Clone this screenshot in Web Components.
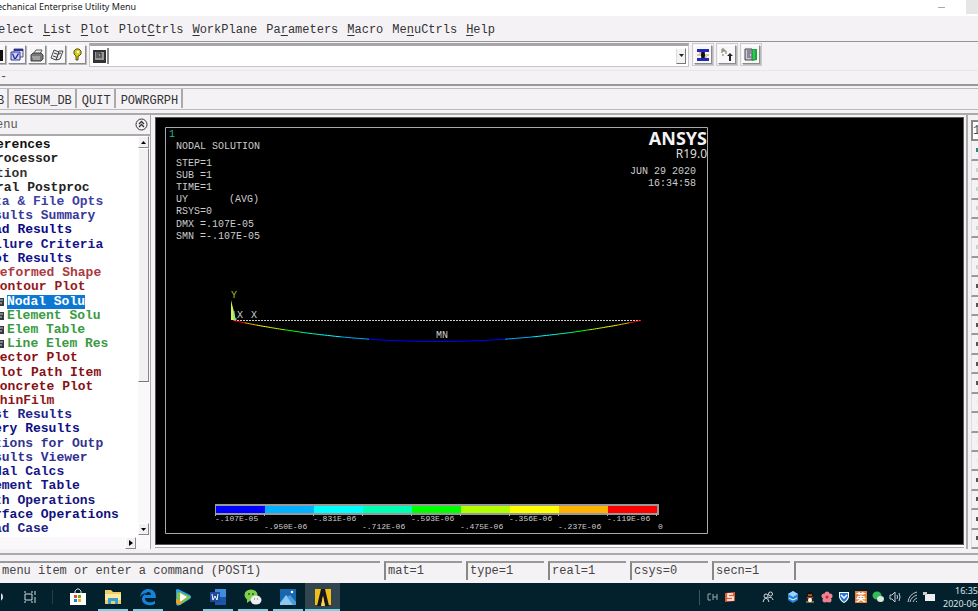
<!DOCTYPE html>
<html lang="en">
<head>
<meta charset="utf-8">
<title>Mechanical Enterprise Utility Menu</title>
<style>
html,body{margin:0;height:100%;overflow:hidden;background:#f5f2f6}
body{font-family:"Liberation Mono",monospace;font-size:12px;color:#333}
</style>
</head>
<body>
<ansys-app></ansys-app>
<script>
const base = `*{box-sizing:border-box}button,input{font:inherit;color:inherit;margin:0;padding:0;border:0;background:none;border-radius:0;outline:0}svg{display:block}`;
function define(name, css, html, after) {
  customElements.define(name, class extends HTMLElement {
    connectedCallback() {
      if (this.shadowRoot) return;
      const r = this.attachShadow({mode: 'open'});
      r.innerHTML = `<style>${base}${css}</style>${typeof html === 'function' ? html(this) : html}`;
      if (after) after(r, this);
    }
  });
}

define('title-bar', `
:host{display:flex;height:16px;background:#fff;color:#222;font:9px/14px "Noto Sans",sans-serif;justify-content:space-between}
span{white-space:nowrap;margin-left:-3px}
.w{display:flex;gap:18px}
button{width:12px;height:14px;line-height:12px;color:#888}
button:last-child{background:#e6e6e6}
`, `<span>echanical Enterprise Utility Menu</span><div class="w"><button aria-label="Minimize"><svg width="12" height="14"><path d="M2 7.5h7" stroke="#aaa"/></svg></button><button aria-label="Maximize"></button></div>`);

define('menu-bar', `
:host{display:flex;gap:9px;height:26px;padding-top:2px;margin-left:-2px;border-bottom:1px solid #949395;align-items:center;overflow:hidden}
button{white-space:nowrap;line-height:18px}
u{text-underline-offset:2px;text-decoration-thickness:1px}
`, ['elect','<u>L</u>ist','<u>P</u>lot','Plot<u>C</u>trls','<u>W</u>orkPlane','Pa<u>r</u>ameters','<u>M</u>acro','Me<u>n</u>uCtrls','<u>H</u>elp'].map(t => `<button>${t}</button>`).join(''));

define('tool-button', `
:host{display:block;flex:none}
button{display:grid;place-items:center;width:18px;height:19px;background:#f8f6f9;border:1px solid;border-color:#fff #8b8b8b #8b8b8b #fff;box-shadow:1px 1px #b9b9b9}
::slotted(svg){display:block}
`, h => `<button aria-label="${h.getAttribute('label')}"><slot></slot></button>`);

define('command-bar', `
:host{display:flex;box-sizing:border-box;height:29px;padding-bottom:3px;align-items:center;border-bottom:1px solid #e9e6ea}
.tools{display:flex;gap:2px;margin-left:-12px}
.combo{display:flex;flex:0 1 600px;height:24px;margin:0 1px 0 3px;border:1px solid #c8c6c9;padding:2px;background:#fff;border-top:3px solid #a5a4a6}
.combo>svg{margin:0 1px}
input{flex:1;min-width:0;border-left:2px solid #888;background:#fff}
.combo button{width:10px;border:1px solid;border-color:#fff #777 #777 #ddd;background:#f5f2f6;display:grid;place-items:center}
.g{border:1px solid #ccc;padding:1px;margin-left:2px}
`, `<div class="tools">
<tool-button label="Save"><svg width="14" height="14"><path d="M1 2h12v11H1z" fill="#111"/><path d="M4 2h6v4H4z" fill="#f4f1c0"/></svg></tool-button>
<tool-button label="Raise"><svg width="14" height="14"><path d="M4 1h9v8H4z" fill="#e6e6f5" stroke="#556"/><path d="M4 1h9v2H4z" fill="#2431a2"/><path d="M1 4h9v8H1z" fill="#ced3f1" stroke="#34389d"/><path d="M3 5l2 5 3-5 1 1-3 5H4L2 6z" fill="#2330a5"/></svg></tool-button>
<tool-button label="Print"><svg width="14" height="14"><path d="M4 5l2-3h6l-2 4" fill="#eee" stroke="#555"/><path d="M1 7l2-2h8l2 2v4l-2 2H1z" fill="#777" stroke="#444"/><path d="M2 9h8M3 11h7" stroke="#ccc"/></svg></tool-button>
<tool-button label="Report"><svg width="14" height="14" fill="#eee" stroke="#444"><path d="M4 2l5 2-3 8-5-2zM9 3l4 0-3 8-4 1z"/><path d="M4 5l3 1M3 8l3 1M9 6l2-1"/></svg></tool-button>
<tool-button label="Help"><svg width="14" height="14"><path d="M4 6V3l2-2h3l2 2v3L9 8H8v4H6V8z" fill="#d8ce18" stroke="#555006"/><path d="M7 3h2v2H7z" fill="#fff"/></svg></tool-button></div>
<div class="combo"><svg width="13" height="16"><path d="M0 2h13v13H0z" fill="#333"/><path d="M2 4h9v8H2z" fill="#999"/><path d="M3 5h5M3 7h3M3 9h6M8 5v3" stroke="#222"/></svg><input aria-label="Command prompt"><button aria-label="History"><svg width="5" height="3"><path d="M0 0h5L2.500 3z" fill="#222"/></svg></button></div>
<tool-button class="g" label="Section"><svg width="14" height="14"><path d="M1 1h12v3H1zM1 10h12v3H1zM5 3h4v8H5z" fill="#222ab0"/><path d="M1 7h12M3 5h2M9 9h2" stroke="#b3a62c"/><path d="M7 4v6M5 7h4" stroke="#111" stroke-width="2"/></svg></tool-button>
<tool-button class="g" label="Contact"><svg width="14" height="14"><path d="M2 1h2v2H2zM1 4h2M4 3h2v3M3 6v2" fill="none" stroke="#757650"/><path d="M9 13V7h2v6zM7 8l3-3 3 3z" fill="#222"/></svg></tool-button>
<tool-button class="g" label="Hidden panel"><svg width="14" height="14"><path d="M1 1h7v11H1z" fill="#ccc" stroke="#444"/><path d="M3 3h4M3 5h4M3 7h3M3 9h4" stroke="#447"/><path d="M8 1h5v11l-5 1z" fill="#19a63e"/><path d="M10 2v9" stroke="#52e476"/></svg></tool-button>`);

define('abbr-bar', `
:host{display:block}
.gap{height:15px;border-bottom:2px solid #99979a;line-height:12px;color:#555}
.row{display:flex;height:22px;margin-top:2px;border-top:1px solid #bbb;border-bottom:1px solid #bbb;padding-bottom:1px}
button{padding:5px 3px 0 5px;border-right:2px solid #aaa;white-space:nowrap;line-height:14px}
button:first-of-type{margin-left:-8px}
`, `<div class="gap">-</div><div class="row"><button>B</button><button>RESUM_DB</button><button>QUIT</button><button>POWRGRPH</button></div>`);

const tree = [
 [0,'erences','#111'],[0,'rocessor','#222'],[0,'tion','#333'],[0,'ral Postproc','#222'],
 [1,'ta &amp; File Opts','#4040a4'],[1,'sults Summary','#38389c'],[1,'ad Results','#080888'],[1,'ilure Criteria','#15158a'],[1,'ot Results','#10108a'],
 [2,'Deformed Shape','#aa3b41'],[2,'Contour Plot','#921b20'],[3,'Nodal Solu','#fff'],[3,'Element Solu','#3b9a43'],[3,'Elem Table','#369c3e'],[3,'Line Elem Res','#3b9a43'],
 [2,'Vector Plot','#8a0f14'],[2,'Plot Path Item','#861217'],[2,'Concrete Plot','#861217'],[2,'ThinFilm','#8e171c'],
 [1,'st Results','#22228e'],[1,'ery Results','#0d0d84'],[1,'tions for Outp','#33338f'],[1,'sults Viewer','#303092'],[1,'dal Calcs','#151588'],[1,'ement Table','#151584'],[1,'th Operations','#15157e'],[1,'rface Operations','#10107c'],[1,'ad Case','#222280']];

define('main-menu', `
:host{display:grid;box-sizing:border-box;grid-template:21px minmax(0,1fr) 12px / minmax(0,1fr) 12px;width:151px;flex:none;border-right:1px solid #aaa;overflow:hidden}
header{grid-column:1/3;display:flex;justify-content:space-between;align-items:center;border-bottom:2px solid #aaa;padding-right:2px}
header span{margin-left:-4px;color:#555}
ul{list-style:none;margin:0;padding:2px 0 1px;display:flex;flex-direction:column;background:#fff;font-weight:bold;font-size:13px;overflow:hidden}
li{flex:1;display:flex;align-items:center;min-height:0}
button{white-space:nowrap;text-align:left;line-height:14px}
.l0{margin-left:-4px}.l1{margin-left:-6px}.l2{margin-left:-8px}
.l3 svg{margin-right:3px}
.sel button{background:#0c78d4}
.v{display:flex;flex-direction:column;background:#faf8fb;padding-bottom:2px}
.v button,.h button{width:11px;height:12px;display:grid;place-items:center;border:1px solid;border-color:#fff #888 #888 #fff;background:#f3f0f4}
.thumb{flex:0 0 234px;border:1px solid;border-color:#fff #888 #777 #fff;background:#f3f0f4;width:11px}
.sp{flex:1}
.h{grid-column:1/3;display:flex;justify-content:flex-end;background:#faf8fb;padding-right:14px}
`, `<header><span>enu</span><button aria-label="Collapse"><svg width="13" height="13" fill="none" stroke="#333"><circle cx="6.500" cy="6.500" r="5.500"/><path d="M4 6l2.500-2.500L9 6M4 9l2.500-2.500L9 9" stroke-width="1.300"/></svg></button></header>
<ul>${tree.map(([l,t,c]) => `<li class="l${l}${t==='Nodal Solu'?' sel':''}" style="color:${c}">${l===3?'<svg width="4" height="10"><path d="M0 1h4v8H0z" fill="#333b40"/><path d="M0 3h3M0 6h2" stroke="#ccc"/></svg>':''}<button>${t}</button></li>`).join('')}</ul>
<div class="v"><button aria-label="Scroll up"><svg width="5" height="3"><path d="M0 3h5L2.500 0z"/></svg></button><div class="thumb"></div><div class="sp"></div><button aria-label="Scroll down"><svg width="5" height="3"><path d="M0 0h5L2.500 3z"/></svg></button></div>
<div class="h"><button aria-label="Scroll right"><svg width="4" height="6"><path d="M0 0v6l4-3z"/></svg></button></div>`);

const bands = ['#ff0000','#ffb200','#ffff00','#b2ff00','#00ff00','#00ffb2','#00ffff','#00b2ff','#0000ff'];
function plot() {
  const cx = 437, half = 204, depth = 21;
  const pt = u => `${(cx + half * u).toFixed(1)} ${(320.5 + depth * (1 - u * u)).toFixed(1)}`;
  const curve = bands.map((c, k) => {
    const a = Math.sqrt(1 - k / 9), b = Math.sqrt(Math.max(0, 1 - (k + 1) / 9));
    return [-1, 1].map(s => {
      let d = 'M' + pt(s * a);
      for (let i = 1; i <= 8; i++) d += 'L' + pt(s * (a + (b - a) * i / 8));
      return `<path d="${d}" stroke="${c}" fill="none"/>`;
    }).join('');
  }).join('');
  const lab = ['-.107E-05','-.950E-06','-.831E-06','-.712E-06','-.593E-06','-.475E-06','-.356E-06','-.237E-06','-.119E-06','0'];
  const legend = [...bands].reverse().map((c, i) => `<path d="M${216 + i * 49} 506h49v7h-49z" fill="${c}"/>`).join('')
    + lab.map((t, i) => `<path d="M${215.5 + i * 49} 513v3" stroke="#aaa"/><text class="s" x="${i === 9 ? 658 : 215 + i * 49}" y="${i % 2 ? 529 : 521}">${t}</text>`).join('');
  const info = [['NODAL SOLUTION',149],['STEP=1',166],['SUB =1',178],['TIME=1',190],['UY',202],['RSYS=0',214],['DMX =.107E-05',227],['SMN =-.107E-05',239]];
  return `<svg width="100%" height="100%" role="img" aria-label="Nodal solution contour plot"><g transform="translate(-156 -118)">
<path d="M165.500 127.500h542v406h-542z" fill="none" stroke="#aaa"/>
<text class="win" x="169" y="137">1</text>
${info.map(([t,y]) => `<text x="176" y="${y}">${t}</text>`).join('')}<text x="229" y="202">(AVG)</text>
<text class="logo" x="707" y="145" text-anchor="end">ANSYS</text><text class="ver" x="707" y="158" text-anchor="end">R19.0</text>
<text x="696" y="174" text-anchor="end">JUN 29 2020</text><text x="696" y="186" text-anchor="end">16:34:58</text>
<path d="M234 320.500H641" stroke="#ccc" stroke-dasharray="2 1"/>
${curve}
<path d="M231 300v20h5z" fill="#d6f04a"/><path d="M234 311v8h3" stroke="#55d7d0" fill="none"/>
<text class="axis" x="231" y="298">Y</text><text x="237" y="318">X</text><text x="251" y="318">X</text><text x="436" y="338">MN</text>
<path d="M215 504h444v11H215z" fill="#999"/>${legend}
</g></svg>`;
}
define('graphics-window', `
:host{display:block;box-sizing:border-box;flex:1;min-width:0;margin:2px 2px 4px 4px;background:#000;border:1px solid #555;overflow:hidden;box-shadow:0 2px #fff,0 3px #aaa}
text{font:10px "Liberation Mono",monospace;fill:#ccc;white-space:pre}
.win{fill:#21b59b}
.axis{fill:#aabf22}
.s{font-size:8px}
.logo{font:bold 18px "Noto Sans",sans-serif;fill:#f2f2f2}
.ver{font:12px "Noto Sans",sans-serif;fill:#ddd}
`, plot);

define('view-tools', `
:host{display:flex;box-sizing:border-box;flex-direction:column;width:12px;flex:none;border-left:2px solid #aaa;padding:5px 0 0 3px;overflow:hidden}
button{display:flex;align-items:center;justify-content:flex-end;flex:1;min-height:0;border-bottom:2px solid #999;border-left:1px solid #ddd}
.win{border:2px solid #888;border-right:0;background:#fff;justify-content:flex-start;color:#355}
`, `<button class="win" aria-label="Window">1</button>` + Array.from({length:21}, (_, i) => `<button aria-label="View tool ${i+1}"><svg width="2" height="6"><path d="M0 1h2v4H0z" fill="${i<7?(i===0?'#208b85':'#bcd8d8'):(i>12&&i<17?'#eee':'#555')}"/></svg></button>`).join(''));

define('status-bar', `
:host{display:flex;box-sizing:border-box;height:34px;padding:12px 0 3px;background:linear-gradient(#f5f2f6 4px,#aaa 4px,#aaa 6px,#f5f2f6 6px)}
span{box-sizing:border-box;white-space:nowrap;overflow:hidden;line-height:17px;border-top:2px solid #999;border-left:2px solid #888;padding-left:2px;flex:0 1 78px;margin-right:4px;color:#444}
span:first-of-type{flex-basis:380px;border-left:0}
span:last-of-type{flex:1;margin:0}
`, `<span>menu item or enter a command (POST1)</span><span>mat=1</span><span>type=1</span><span>real=1</span><span>csys=0</span><span>secn=1</span><span></span>`);

const apps = [
 ['Store',0,'<path d="M6 5V3l2-2h2l2 2v2" fill="none" stroke="#ddd"/><path d="M1 5h16v12H1z" fill="#fff"/><path d="M5 7h3v3H5z" fill="#e64d24"/><path d="M9 7h3v3H9z" fill="#74a91c"/><path d="M5 11h3v3H5z" fill="#1787cb"/><path d="M9 11h3v3H9z" fill="#eeb313"/>'],
 ['File Explorer',1,'<path d="M1 2h6l2 2h8v12H1z" fill="#f0cd68"/><path d="M1 6h16v6H1z" fill="#ffeaa4"/><path d="M4 10h10v6h-3v-3H7v3H4z" fill="#3aa0d3"/>'],
 ['Edge',1,'<path d="M1 9C2 3 6 1 9 1c5 0 8 3 8 9H6c0 5 6 5 10 3v3C9 19 2 16 3 10c1-3 3-4 5-5-3 0-5 1-7 4zm5-2h6c0-4-5-4-6 0z" fill="#1782da"/>'],
 ['Video',0,'<path d="M2 2q1-2 4 0l10 5q2 2 0 4l-10 6q-4 2-4-2z" fill="#2aa4e8"/><path d="M3 5q3-2 5 0l9 4-11 8q-3 0-3-3z" fill="#8ac23b"/><path d="M6 5l7 4-7 5z" fill="#fff"/><path d="M2 11v3q1 4 4 2l2-2z" fill="#f39b2c"/>'],
 ['Word',1,'<path d="M6 1h11v16H6z" fill="#3f8ddd"/><path d="M6 9h11v8H6z" fill="#1a56a9"/><path d="M1 4h10v10H1z" fill="#1c4b9b"/><path d="M3 6l1 6 2-4 2 4 1-6" fill="none" stroke="#fff"/>'],
 ['WeChat',1,'<ellipse cx="7" cy="7" rx="6.500" ry="5.500" fill="#7fd04f"/><path d="M3 11v4l4-3z" fill="#7fd04f"/><ellipse cx="12" cy="12" rx="5.500" ry="4.500" fill="#eee"/><path d="M4 6h2M8 6h2" stroke="#285c20" stroke-width="1.500"/><path d="M10 11h1M13 11h1" stroke="#666"/>'],
 ['Photos',1,'<path d="M1 1h16v16H1z" fill="#1766b0"/><path d="M1 15l6-8 10 10H1z" fill="#8cc7ee"/><path d="M8 9l3-2 6 7v3h-3z" fill="#4d9cda"/><circle cx="13" cy="4" r="1.300" fill="#fff"/>'],
 ['ANSYS',2,'<path d="M1 1h16v16H1z" fill="#f2bd1b"/><path d="M3 18L7 1h4l4 17h-4L9 8 7 18z" fill="#171717"/><path d="M7 18L9 8l2 10z" fill="#f8d45c"/>']];
const tray = [
 '<path d="M4 3H1v6h3M6 3v6M10 3v6M6 6h4" fill="none" stroke="#9aa"/>',
 '<path d="M1 2l10-1v9l-10 1z" fill="#e35a2d"/><path d="M9 3H4v3h5v3H3" fill="none" stroke="#fff" stroke-width="1.500"/>',
 '<g fill="none" stroke="#d7dde0"><circle cx="8.500" cy="3" r="2"/><circle cx="4" cy="5" r="2"/><path d="M1 11q1-4 3-4t3 4M6 7q4-2 5 2"/></g>',
 '<path d="M6 0l5 3v6l-5 3-5-3V3z" fill="#2784dd"/><path d="M1 3l5 3 5-3-5-3z" fill="#9bd3fa"/><path d="M2 7l4 2 4-2" stroke="#fff" fill="none"/>',
 '<circle cx="6" cy="4" r="3" fill="#111"/><ellipse cx="6" cy="8" rx="4" ry="4" fill="#222"/><ellipse cx="6" cy="9" rx="2" ry="2.500" fill="#fff"/><path d="M3 6h6v1H3z" fill="#e32c27"/><path d="M4 4h4" stroke="#f4ac28"/><path d="M2 11h3M7 11h3" stroke="#f4ac28"/>',
 '<g fill="#ef8390"><circle cx="6" cy="3" r="2.500"/><circle cx="3" cy="5" r="2.500"/><circle cx="9" cy="5" r="2.500"/><circle cx="4" cy="9" r="2.500"/><circle cx="8" cy="9" r="2.500"/></g><circle cx="6" cy="6" r="1.500" fill="#c32a44"/>',
 '<path d="M1 1h10v5q-1 4-5 6-4-2-5-6z" fill="#fff"/><path d="M2 2h8v4q-1 3-4 5-3-2-4-5z" fill="#2576dc"/><path d="M3 4l3 3 3-3" stroke="#fff" fill="none" stroke-width="1.500"/>',
 '',
 '<ellipse cx="5" cy="4.500" rx="4.500" ry="4" fill="#35ba57"/><ellipse cx="8.500" cy="8" rx="3.500" ry="3" fill="#d9eadd"/>',
 '<path d="M1 4h2l3-3v10L3 8H1z" fill="none" stroke="#ccd"/><path d="M8 4q1 2 0 4M10 2q2 4 0 8" fill="none" stroke="#ccd"/>',
 '<path d="M2 11Q3 3 11 1M4 11Q5 6 11 4M7 11Q8 8 11 7M10 11l1-1" fill="none" stroke="#bcc6ca"/>',
 '<path d="M2 3h10v7H2z" fill="#eee"/><path d="M0 1h4v3H0z" fill="#ccc"/>'];
define('task-bar', `
:host{display:flex;height:28px;background:#03202d;color:#dfe6e8;overflow:hidden;box-sizing:border-box}
nav,.tray{display:flex}
button{display:grid;place-items:center;flex:none}
.app{width:35px;height:28px;padding:0 0 1px}
.run{background:linear-gradient(#74d4ea,#74d4ea) bottom/30px 2px no-repeat}
.act{background:linear-gradient(#74d4ea,#74d4ea) bottom/35px 2px no-repeat,#32464f}
.left{width:60px;display:flex;align-items:center;justify-content:flex-end;gap:15px;padding-right:7px}
.left i{width:1px;height:14px;background:#26404b}
.left button:first-child{margin-right:4px}
.grow{flex:1}
.tray{align-items:center;gap:5px}
.tray>i{width:1px;height:15px;background:#3b535d;margin-right:2px}
.people{margin:0 8px 0 21px}
.zh{width:12px;height:12px;background:#e98038;color:#fff;font:bold 10px/12px "Noto Sans CJK SC",sans-serif}
time{font:9px/13px "Noto Sans",sans-serif;width:35px;margin-left:3px;text-align:right;white-space:nowrap}
`, `<div class="left"><button aria-label="Search"><svg width="4" height="12"><circle cx="-2" cy="6" r="4" fill="#dde"/></svg></button><button aria-label="Task view"><svg width="13" height="12" fill="none" stroke="#d7dde0"><path d="M1 3h7v6H1zM1 0v2M8 0v2M1 12v-2M8 12v-2M11 0v4M11 6v6"/></svg></button><i></i></div>
<nav>${apps.map(([n,s,p]) => `<button class="app ${['','run','act'][s]}" aria-label="${n}"><svg width="18" height="18">${p}</svg></button>`).join('')}</nav>
<div class="grow"></div><div class="tray"><i></i>${tray.map((p,i) => i===7 ? '<button class="zh">英</button>' : `<button class="${i===2?'people':''}" aria-label="Tray ${i+1}"><svg width="12" height="12">${p}</svg></button>`).join('')}<time>16:35<br>2020-06-</time></div>`);

define('ansys-app', `
:host{display:flex;flex-direction:column;height:100vh;background:#f5f2f6}
main{flex:1;min-height:0;display:flex;border-top:2px solid #aaa;margin-top:3px}
`, `<title-bar></title-bar><menu-bar></menu-bar><command-bar></command-bar><abbr-bar></abbr-bar>
<main><main-menu></main-menu><graphics-window></graphics-window><view-tools></view-tools></main>
<status-bar></status-bar><task-bar></task-bar>`);
</script>
</body>
</html>
